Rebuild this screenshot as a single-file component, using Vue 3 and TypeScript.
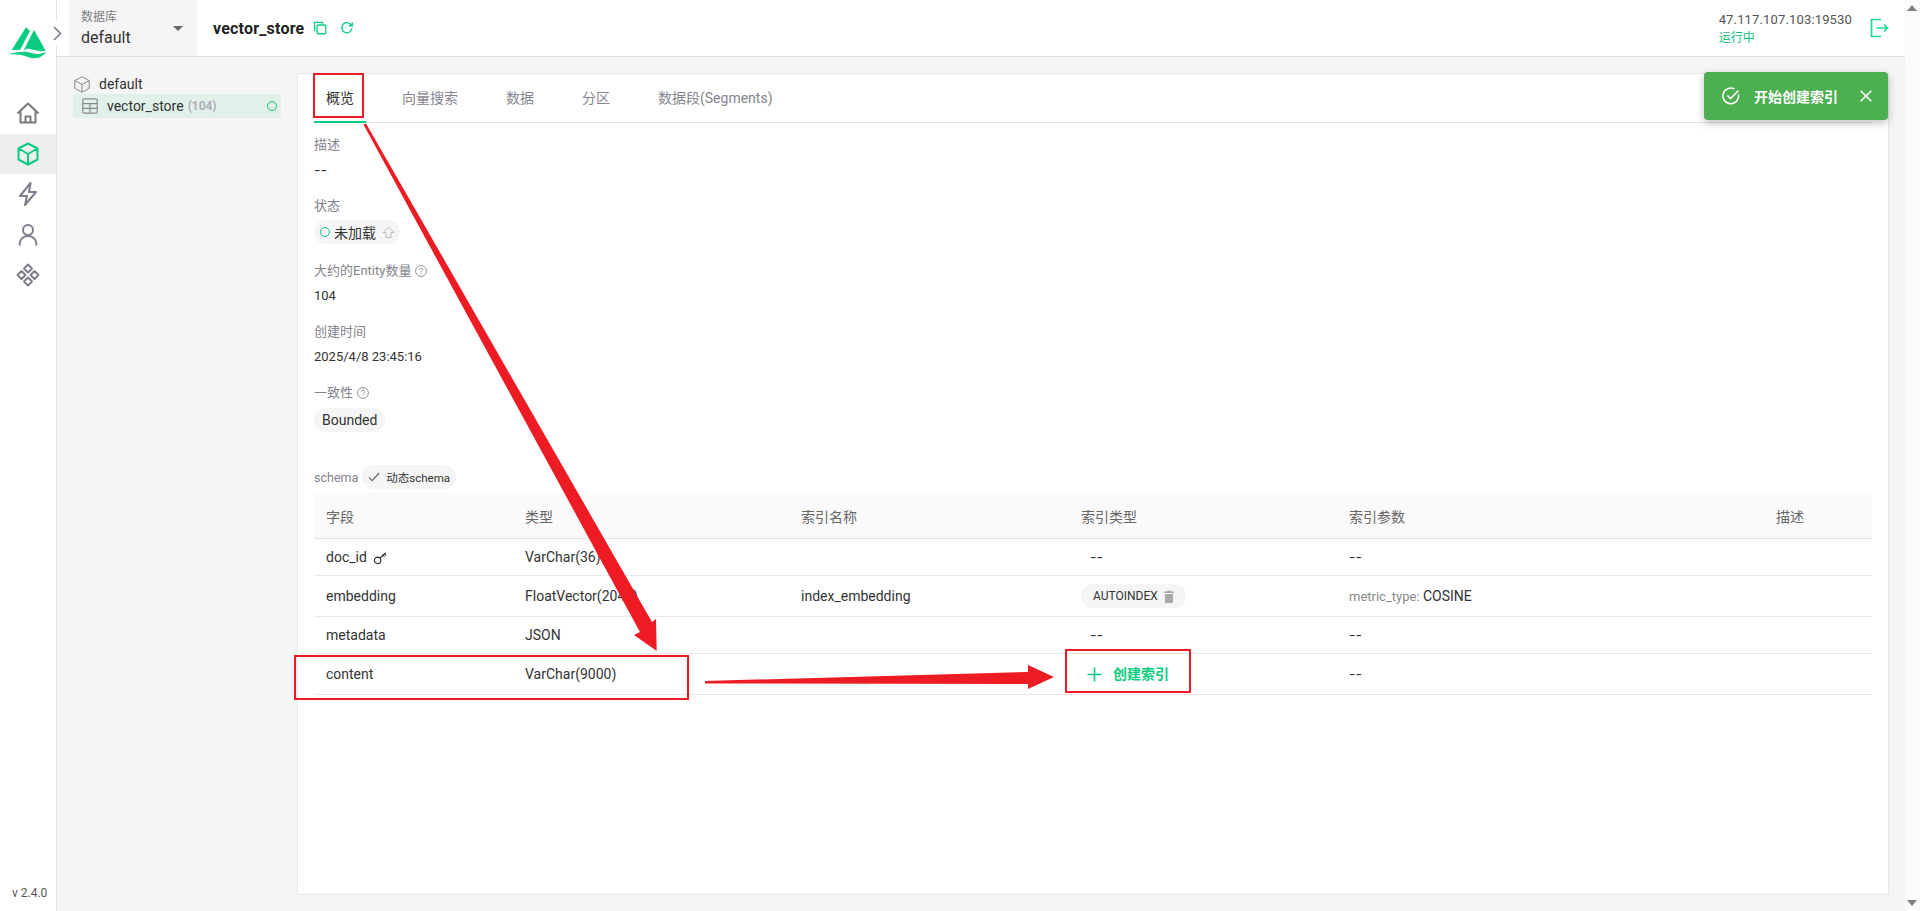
<script setup lang="ts">
// Milvus collection overview with red tutorial annotations on top
interface TabItem {
  label: string
  active?: boolean
}

interface NavItem {
  name: string
  active?: boolean
}

const tabs: TabItem[] = [
  { label: '概览', active: true },
  { label: '向量搜索' },
  { label: '数据' },
  { label: '分区' },
  { label: '数据段(Segments)' }
]

const navItems: NavItem[] = [
  { name: 'home' },
  { name: 'cube', active: true },
  { name: 'bolt' },
  { name: 'user' },
  { name: 'apps' }
]

const columns = ['字段', '类型', '索引名称', '索引类型', '索引参数', '描述']
</script>

<template>
  <div class="page">
    <aside class="nav">
      <div class="logo-wrap">
        <svg class="logo" viewBox="10 27 36 32" width="36" height="32">
          <path d="M26 27.3 L30 31 L20 50 H11.7 Z" fill="#0acc80" />
          <path d="M34 30 L45.7 50.7 C40 52 35 50 30 49 C28 48.5 25 49 23.5 50.5 Z" fill="#0acc80" />
          <path d="M10 53.5 C18 52.5 24 50.5 31 53 C36 55 41 54 46 52 C43 57 36 60 28 57 C22 55 16 54 10 54.5 Z" fill="#0acc80" />
        </svg>
      </div>
      <div v-for="item in navItems" :key="item.name" class="nav-item" :class="{ active: item.active }">
        <svg width="24" height="24" viewBox="0 0 24 24" fill="none" stroke-width="2" stroke-linejoin="round">
          <g v-if="item.name === 'home'" stroke="#7a7a7e">
            <path d="M1.5 12.5 L12 2.5 L22.5 12.5" />
            <path d="M4.5 10 V21.5 H19.5 V10" />
            <path d="M9.5 21.5 V15.5 H14.5 V21.5" />
          </g>
          <path v-else-if="item.name === 'cube'" stroke="#0acc80" d="M12 1.5 L21.5 6.5 V17.5 L12 22.5 L2.5 17.5 V6.5 Z M2.5 6.5 L12 12 L21.5 6.5 M12 12 V22.5" />
          <path v-else-if="item.name === 'bolt'" stroke="#7d7d8c" d="M14.5 1 L4 14 H11 L9 23 L20 10 H13 Z" />
          <g v-else-if="item.name === 'user'" stroke="#7d7d8c">
            <circle cx="12" cy="7" r="5" />
            <path d="M3.5 22.5 C3.5 16.5 7 13 12 13 C17 13 20.5 16.5 20.5 22.5" />
          </g>
          <g v-else stroke="#7d7d8c">
            <path d="M12 1.5 L16 5.5 L12 9.5 L8 5.5 Z" />
            <path d="M5.5 8 L9.5 12 L5.5 16 L1.5 12 Z" />
            <path d="M18.5 8 L22.5 12 L18.5 16 L14.5 12 Z" />
            <path d="M12 14.5 L16 18.5 L12 22.5 L8 18.5 Z" />
          </g>
        </svg>
      </div>
      <div class="version">v 2.4.0</div>
      <div class="nav-toggle">
        <svg width="9" height="15" viewBox="0 0 9 15" fill="none" stroke="#7a7a8c" stroke-width="1.6">
          <path d="M1 1 L7.5 7.5 L1 14" />
        </svg>
      </div>
    </aside>

    <div class="right">
      <header class="topbar">
        <div class="db-select">
          <div class="db-label">数据库</div>
          <div class="db-value">default</div>
          <span class="caret"></span>
        </div>
        <div class="title">vector_store</div>
        <svg class="title-icon" width="14" height="14" viewBox="0 0 16 16" fill="none" stroke="#0acc80" stroke-width="1.5">
          <rect x="4.6" y="4.6" width="10" height="10" rx="1.5" />
          <path d="M2.5 11 H1.8 V1.6 H11 V3" />
        </svg>
        <svg class="title-icon refresh" width="14" height="14" viewBox="0 0 16 16" fill="none" stroke="#0acc80" stroke-width="1.5">
          <path d="M13.6 8.4 A5.8 5.8 0 1 1 11.8 3.4 L14 5.4" />
          <path d="M14 1.4 V5.4 H10.2" />
        </svg>
        <div class="status-wrap">
          <div class="address">47.117.107.103:19530</div>
          <div class="running">运行中</div>
        </div>
        <svg class="exit" width="19" height="20" viewBox="0 0 19 20" fill="none" stroke="#20d795" stroke-width="1.7">
          <path d="M11 1.5 H1.5 V18.5 H11" />
          <path d="M6.5 10 H17.5 M14 6.5 L17.5 10 L14 13.5" />
        </svg>
      </header>

      <main class="main">
        <section class="tree">
          <div class="tree-root">
            <svg width="16" height="17" viewBox="0 0 16 17" fill="none" stroke="#888" stroke-width="1">
              <path d="M8 .8 L15.2 4.6 V12.4 L8 16.2 L.8 12.4 V4.6 Z M.8 4.6 L8 8.5 L15.2 4.6 M8 8.5 V16.2" />
            </svg>
            <span>default</span>
          </div>
          <div class="tree-row">
            <svg width="16" height="16" viewBox="0 0 16 16" fill="none" stroke="#8b8b8b" stroke-width="1.2">
              <rect x=".8" y=".8" width="14.4" height="14.4" rx="1.5" />
              <path d="M.8 5.6 H15.2 M.8 10.4 H15.2 M8 5.6 V15.2" />
            </svg>
            <span class="tree-name">vector_store</span>
            <span class="tree-count">(104)</span>
            <span class="dot tree-dot"></span>
          </div>
        </section>

        <section class="card">
          <nav class="tabs">
            <div v-for="tab in tabs" :key="tab.label" class="tab" :class="{ active: tab.active }">{{ tab.label }}</div>
          </nav>

          <div class="info">
            <div class="label">描述</div>
            <div class="value dashes">--</div>

            <div class="label">状态</div>
            <div class="chip-line">
              <span class="chip">
                <span class="dot"></span>
                <span class="chip-text">未加载</span>
                <svg width="13" height="13" viewBox="0 0 13 13" fill="none" stroke="#bdbdbd" stroke-width="1">
                  <path d="M6.5 1 L12 6.5 H9 V11.5 H4 V6.5 H1 Z" />
                </svg>
              </span>
            </div>

            <div class="label">
              大约的Entity数量
              <svg class="help" width="12" height="12" viewBox="0 0 12 12" fill="none" stroke="#888" stroke-width=".9">
                <circle cx="6" cy="6" r="5.4" />
                <path d="M4.4 4.7 C4.4 2.8 7.7 2.9 7.7 4.7 C7.7 5.9 6 5.9 6 7.3 M6 8.2 V9.2" />
              </svg>
            </div>
            <div class="value">104</div>

            <div class="label">创建时间</div>
            <div class="value">2025/4/8 23:45:16</div>

            <div class="label">
              一致性
              <svg class="help" width="12" height="12" viewBox="0 0 12 12" fill="none" stroke="#888" stroke-width=".9">
                <circle cx="6" cy="6" r="5.4" />
                <path d="M4.4 4.7 C4.4 2.8 7.7 2.9 7.7 4.7 C7.7 5.9 6 5.9 6 7.3 M6 8.2 V9.2" />
              </svg>
            </div>
            <div class="chip-line bounded-line">
              <span class="chip bounded">Bounded</span>
            </div>
          </div>

          <div class="schema-line">
            <span class="schema-label">schema</span>
            <span class="chip schema-chip">
              <svg width="12" height="10" viewBox="0 0 12 10" fill="none" stroke="#666" stroke-width="1.2">
                <path d="M1 5.4 L4.2 8.6 L11 1" />
              </svg>
              <span>动态schema</span>
            </span>
          </div>

          <table class="fields">
            <colgroup>
              <col style="width: 199px" />
              <col style="width: 276px" />
              <col style="width: 280px" />
              <col style="width: 268px" />
              <col style="width: 427px" />
              <col style="width: 108px" />
            </colgroup>
            <thead>
              <tr>
                <th v-for="col in columns" :key="col">{{ col }}</th>
              </tr>
            </thead>
            <tbody>
              <tr>
                <td>
                  doc_id
                  <svg class="key" width="14" height="14" viewBox="0 0 14 14" fill="none" stroke="#333" stroke-width="1.2">
                    <circle cx="4.6" cy="9.4" r="3.2" />
                    <path d="M7 7 L12.6 1.6 M9.8 4.2 L11.6 5.6 M11.4 2.8 L13 4.2" />
                  </svg>
                </td>
                <td>VarChar(36)</td>
                <td></td>
                <td><span class="dash dashes">--</span></td>
                <td class="dashes">--</td>
                <td></td>
              </tr>
              <tr>
                <td>embedding</td>
                <td>FloatVector(2048)</td>
                <td>index_embedding</td>
                <td>
                  <span class="chip index-chip">
                    <span>AUTOINDEX</span>
                    <svg width="10" height="13" viewBox="0 0 10 13" fill="#aaa">
                      <path d="M0 1.5 H3 L3.5 .5 H6.5 L7 1.5 H10 V3 H0 Z M1 4 H9 V13 H1 Z" />
                    </svg>
                  </span>
                </td>
                <td><span class="metric">metric_type:</span> COSINE</td>
                <td></td>
              </tr>
              <tr>
                <td>metadata</td>
                <td>JSON</td>
                <td></td>
                <td><span class="dash dashes">--</span></td>
                <td class="dashes">--</td>
                <td></td>
              </tr>
              <tr>
                <td>content</td>
                <td>VarChar(9000)</td>
                <td></td>
                <td>
                  <span class="create">
                    <svg width="15" height="15" viewBox="0 0 15 15" fill="none" stroke="#0acc80" stroke-width="1.6">
                      <path d="M7.5 .5 V14.5 M.5 7.5 H14.5" />
                    </svg>
                    <span>创建索引</span>
                  </span>
                </td>
                <td class="dashes">--</td>
                <td></td>
              </tr>
            </tbody>
          </table>
        </section>
      </main>
    </div>

    <div class="scrollbar">
      <span class="arrow-up"></span>
      <span class="arrow-down"></span>
    </div>

    <div class="toast">
      <svg width="18" height="18" viewBox="0 0 18 18" fill="none" stroke="#fff" stroke-width="1.5">
        <path d="M16.4 7.4 A7.8 7.8 0 1 1 12.4 2" />
        <path d="M5.4 8.4 L8.6 11.6 L16.4 3.4" />
      </svg>
      <span class="toast-text">开始创建索引</span>
      <svg class="toast-close" width="12" height="12" viewBox="0 0 12 12" fill="none" stroke="#fff" stroke-width="1.5">
        <path d="M.7 .7 L11.3 11.3 M11.3 .7 L.7 11.3" />
      </svg>
    </div>

    <svg class="marks" width="1920" height="911" viewBox="0 0 1920 911">
      <g fill="none" stroke="#ed1c24" stroke-width="2">
        <rect x="314" y="74" width="49" height="43" />
        <rect x="295" y="656" width="393" height="43" />
        <rect x="1066" y="650" width="124" height="42" />
      </g>
      <g fill="#ed1c24">
        <path d="M363.5 124.6 L366 123.4 L652 622 L656 619 L656.7 651 L634 635 L640 632 Z" />
        <path d="M705 681 L1028 672 L1028 665 L1054 677 L1028 689 L1028 684 L705 683.5 Z" />
      </g>
    </svg>
  </div>
</template>

<style>
html,
body {
  margin: 0;
  overflow: hidden;
}
</style>

<style scoped>
.page {
  position: relative;
  display: flex;
  width: 1920px;
  height: 911px;
  overflow: hidden;
  background: #fff;
  color: #333;
  font-family: Roboto, 'Noto Sans CJK SC', sans-serif;
  font-size: 14px;
}

.nav {
  position: relative;
  flex: none;
  display: flex;
  flex-direction: column;
  width: 56px;
  border-right: 1px solid #e2e2e2;
}

.logo-wrap {
  padding: 27px 0 0 10px;
  box-sizing: border-box;
  height: 93px;
}

.logo {
  display: block;
}

.nav-item {
  display: flex;
  align-items: center;
  justify-content: center;
  height: 40.5px;
}

.nav-item.active {
  background: #eee;
}

.version {
  margin-top: auto;
  padding: 0 0 10px 12px;
  font-size: 12px;
  line-height: 16px;
  color: #555;
}

.nav-toggle {
  position: absolute;
  top: 20px;
  left: 50px;
  display: flex;
  align-items: center;
  justify-content: center;
  width: 14px;
  height: 26px;
  background: #fff;
}

.right {
  flex: 1;
  display: flex;
  flex-direction: column;
  min-width: 0;
}

.topbar {
  flex: none;
  display: flex;
  align-items: center;
  height: 56px;
  padding-left: 12px;
  border-bottom: 1px solid #dcdcdc;
}

.db-select {
  position: relative;
  width: 128px;
  height: 56px;
  padding: 9px 0 0 12px;
  box-sizing: border-box;
  background: #f5f5f5;
}

.db-label {
  font-size: 12px;
  line-height: 16px;
  color: #808080;
}

.db-value {
  margin-top: 3px;
  font-size: 16px;
  line-height: 20px;
  color: #333;
}

.caret {
  position: absolute;
  top: 26px;
  left: 104px;
  width: 0;
  height: 0;
  border-left: 5px solid transparent;
  border-right: 5px solid transparent;
  border-top: 5px solid #666;
}

.title {
  margin-left: 16px;
  font-size: 16px;
  font-weight: 700;
  letter-spacing: 0.2px;
  color: #222;
}

.title-icon {
  margin-left: 9px;
}

.title-icon.refresh {
  margin-left: 13px;
}

.status-wrap {
  margin-left: auto;
  margin-right: 18px;
}

.address {
  font-size: 13px;
  letter-spacing: 0.15px;
  line-height: 20px;
  color: #555;
}

.running {
  font-size: 12px;
  line-height: 16px;
  color: #0abf78;
}

.exit {
  margin-right: 16px;
}

.main {
  flex: 1;
  display: flex;
  gap: 16px;
  min-height: 0;
  padding: 16px;
  background: #f5f5f5;
}

.tree {
  flex: none;
  width: 208px;
}

.tree-root {
  display: flex;
  align-items: center;
  gap: 9px;
  height: 21px;
  padding-top: 2px;
  padding-left: 1px;
  box-sizing: border-box;
  line-height: 19px;
}

.tree-row {
  display: flex;
  align-items: center;
  height: 24px;
  padding-left: 9px;
  background: #e2f0ea;
}

.tree-name {
  margin-left: 9px;
}

.tree-count {
  margin-left: 4px;
  font-size: 12px;
  font-weight: 600;
  color: #aaaab4;
}

.dot {
  flex: none;
  display: inline-block;
  width: 8px;
  height: 8px;
  border: 1px solid #0acc80;
  border-radius: 50%;
}

.tree-dot {
  margin-left: auto;
  margin-right: 4px;
}

.card {
  flex: 1;
  min-width: 0;
  padding: 0 16px;
  background: #fff;
  border: 1px solid #e8e8e8;
}

.tabs {
  display: flex;
  gap: 24px;
  height: 48px;
  border-bottom: 1px solid #e2e2e2;
}

.tab {
  height: 48px;
  padding: 0 12px;
  box-sizing: border-box;
  line-height: 48px;
  color: #85858f;
}

.tab.active {
  height: 49px;
  color: #333;
  border-bottom: 2px solid #0acc80;
}

.info {
  padding-top: 12px;
}

.label {
  display: flex;
  align-items: center;
  gap: 4px;
  margin-bottom: 4px;
  font-size: 13px;
  line-height: 20px;
  color: #82828c;
}

.value {
  margin-bottom: 15px;
  font-size: 13px;
  line-height: 22px;
}

.dashes {
  font-family: Inter, sans-serif;
  font-size: 14px;
}

.chip-line {
  height: 24px;
  margin-bottom: 17px;
}

.bounded-line {
  padding-top: 1px;
}

.chip {
  display: inline-flex;
  align-items: center;
  height: 24px;
  background: #f5f5f5;
  border-radius: 12px;
  box-sizing: border-box;
}

.chip .dot {
  margin-left: 6px;
}

.chip-text {
  margin: 0 6px 0 4px;
}

.chip svg:last-child {
  margin-right: 5px;
}

.bounded {
  padding: 0 8px;
}

.schema-line {
  display: flex;
  align-items: center;
  gap: 4px;
  height: 24px;
  margin-top: 33px;
  margin-bottom: 4px;
}

.schema-label {
  font-size: 12.5px;
  color: #82828c;
}

.schema-chip {
  gap: 6px;
  padding: 0 6px;
  font-size: 11.5px;
}

.schema-chip svg:last-child {
  margin-right: 0;
}

.fields {
  width: 1558px;
  table-layout: fixed;
  border-collapse: separate;
  border-spacing: 0;
}

.fields th {
  height: 45px;
  padding: 0 12px;
  background: #fafafa;
  border-bottom: 1px solid #e2e2e2;
  font-weight: 400;
  text-align: left;
  color: #666;
}

.fields td {
  padding: 8px 12px;
  border-bottom: 1px solid #e9e9ed;
  line-height: 20px;
  white-space: nowrap;
}

.key {
  margin-left: 3px;
  vertical-align: -3px;
}

.dash {
  margin-left: 9px;
}

.index-chip {
  gap: 6px;
  vertical-align: top;
  padding: 0 7px 0 12px;
  font-size: 12px;
}

.metric {
  font-size: 13px;
  color: #888;
}

.create {
  display: inline-flex;
  align-items: center;
  height: 24px;
  vertical-align: top;
  margin-left: 6px;
  gap: 11px;
  font-weight: 600;
  color: #0acc80;
}

.scrollbar {
  flex: none;
  position: relative;
  width: 15px;
  background: #fbfbfb;
}

.arrow-up,
.arrow-down {
  position: absolute;
  left: 2px;
  width: 0;
  height: 0;
  border-left: 5px solid transparent;
  border-right: 5px solid transparent;
}

.arrow-up {
  top: 5px;
  border-bottom: 6px solid #808080;
}

.arrow-down {
  bottom: 5px;
  border-top: 6px solid #808080;
}

.toast {
  position: absolute;
  top: 72px;
  left: 1704px;
  display: flex;
  align-items: center;
  width: 184px;
  height: 48px;
  padding-left: 18px;
  box-sizing: border-box;
  background: #4caf50;
  border-radius: 4px;
  box-shadow: 0 3px 8px rgba(0, 0, 0, 0.25);
  color: #fff;
}

.toast-text {
  margin-left: 14px;
  font-size: 14px;
  font-weight: 600;
}

.toast-close {
  margin-left: 22px;
}

.marks {
  position: absolute;
  top: 0;
  left: 0;
  pointer-events: none;
}
</style>
